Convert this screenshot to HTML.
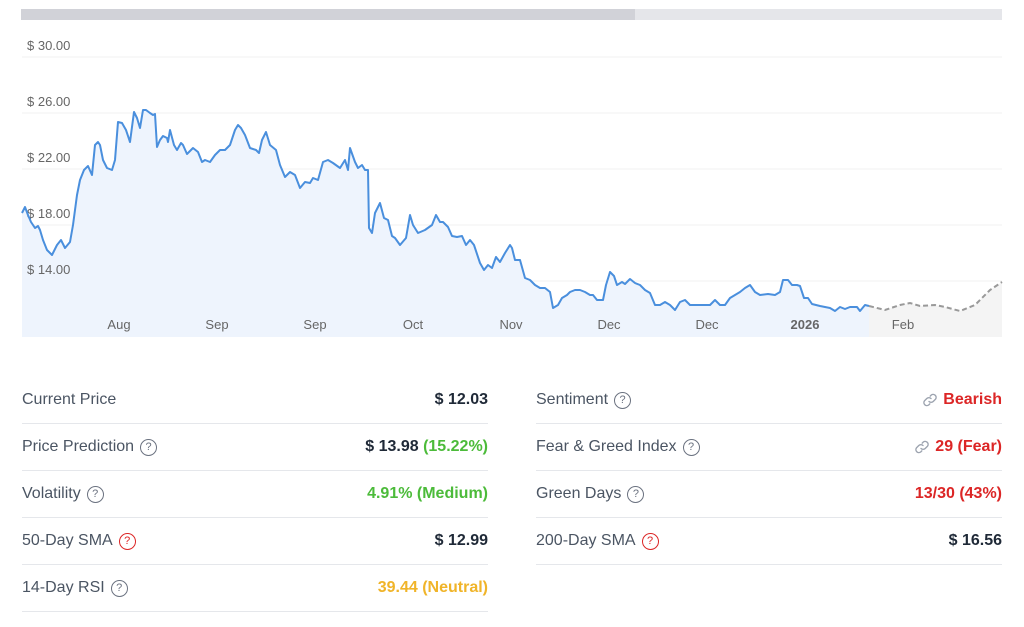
<!DOCTYPE html>
<html><head><meta charset="utf-8"><style>
body{margin:0;width:1024px;height:627px;background:#fff;position:relative;overflow:hidden;font-family:"Liberation Sans",Arial,sans-serif}
.col{position:absolute;top:377px;width:466px}
.row{height:46px;border-bottom:1px solid #e5e7eb;display:flex;align-items:center;justify-content:space-between;font-size:16px}
.l{color:#4b5563;display:flex;align-items:center}
.v{font-weight:bold;color:#1f2937;display:flex;align-items:center}
.q{display:inline-block;width:15px;height:15px;border:1.3px solid #6b7280;border-radius:50%;font-size:11px;line-height:15px;text-align:center;color:#6b7280;margin-left:6px;font-weight:normal}
.q.r{border-color:#dc2626;color:#dc2626}
.g{color:#4cbb3a}.red{color:#dc2626}.y{color:#f0b429}
.lk{margin-right:5px}
</style></head><body>
<div style="position:absolute;left:21px;top:9px;width:981px;height:11px;background:#e5e6ea"></div>
<div style="position:absolute;left:21px;top:9px;width:614px;height:11px;background:#d1d2d8"></div>
<svg width="1024" height="345" style="position:absolute;left:0;top:0" font-family="Liberation Sans,Arial,sans-serif">
<polygon fill="#f4f4f4" points="869,337 869,306 885,310 900,305 910,303 920,306 935,305 945,307 960,311 975,305 990,290 1002,282 1002,337"/>
<g stroke="#f0f0f0" stroke-width="1">
<line x1="22" y1="57" x2="1002" y2="57"/><line x1="22" y1="113" x2="1002" y2="113"/><line x1="22" y1="169" x2="1002" y2="169"/><line x1="22" y1="225" x2="1002" y2="225"/><line x1="22" y1="281" x2="1002" y2="281"/></g>
<polygon fill="#eef4fd" points="22,337 22,213 25,207 28,215 31,222 35,228 38,226 40,230 43,240 47,250 52,255 57,245 61,240 65,248 70,242 73,225 77,195 80,180 84,170 88,166 92,175 95,145 98,142 100,145 103,160 107,168 112,170 115,160 118,122 122,123 126,130 130,142 134,112 137,118 140,128 143,110 146,110 150,113 153,115 155,114 157,147 160,140 163,136 167,138 168,142 170,130 174,145 177,150 181,143 183,145 187,154 193,148 198,152 202,162 205,160 210,162 215,155 220,150 225,150 230,145 235,130 238,125 241,128 245,135 250,148 256,150 259,153 262,140 266,132 270,145 276,150 280,165 285,177 290,172 295,175 300,188 305,182 310,183 313,178 318,180 323,162 328,160 333,163 340,168 345,160 348,170 350,148 355,162 358,168 362,165 365,170 368,170 369,228 372,233 375,213 380,203 384,218 388,220 392,236 395,238 400,245 406,238 410,215 413,225 418,233 425,230 432,225 436,215 440,222 443,222 448,227 452,236 457,237 462,236 466,245 470,240 474,245 480,263 484,270 488,265 492,268 496,257 500,262 505,253 510,245 512,248 515,260 520,260 525,278 530,280 535,285 540,288 545,288 550,292 553,308 558,305 562,298 567,295 570,292 575,290 580,290 585,292 590,295 593,295 597,300 603,300 606,285 610,272 614,276 617,285 622,282 625,284 630,279 635,283 640,285 645,290 650,293 655,305 660,305 665,302 670,305 675,310 680,302 685,300 690,305 700,305 710,305 715,300 720,305 725,305 730,298 735,295 740,292 745,288 750,285 755,292 760,295 768,294 775,295 780,292 783,280 788,280 792,285 797,285 800,286 804,298 808,298 812,304 820,306 830,308 835,311 840,307 845,309 850,307 857,307 860,311 865,305 869,306 869,337"/>
<g fill="#666" font-size="13"><text x="27" y="50">$ 30.00</text><text x="27" y="106">$ 26.00</text><text x="27" y="162">$ 22.00</text><text x="27" y="218">$ 18.00</text><text x="27" y="274">$ 14.00</text></g>
<polyline fill="none" stroke="#4a8fdd" stroke-width="2" stroke-linejoin="round" points="22,213 25,207 28,215 31,222 35,228 38,226 40,230 43,240 47,250 52,255 57,245 61,240 65,248 70,242 73,225 77,195 80,180 84,170 88,166 92,175 95,145 98,142 100,145 103,160 107,168 112,170 115,160 118,122 122,123 126,130 130,142 134,112 137,118 140,128 143,110 146,110 150,113 153,115 155,114 157,147 160,140 163,136 167,138 168,142 170,130 174,145 177,150 181,143 183,145 187,154 193,148 198,152 202,162 205,160 210,162 215,155 220,150 225,150 230,145 235,130 238,125 241,128 245,135 250,148 256,150 259,153 262,140 266,132 270,145 276,150 280,165 285,177 290,172 295,175 300,188 305,182 310,183 313,178 318,180 323,162 328,160 333,163 340,168 345,160 348,170 350,148 355,162 358,168 362,165 365,170 368,170 369,228 372,233 375,213 380,203 384,218 388,220 392,236 395,238 400,245 406,238 410,215 413,225 418,233 425,230 432,225 436,215 440,222 443,222 448,227 452,236 457,237 462,236 466,245 470,240 474,245 480,263 484,270 488,265 492,268 496,257 500,262 505,253 510,245 512,248 515,260 520,260 525,278 530,280 535,285 540,288 545,288 550,292 553,308 558,305 562,298 567,295 570,292 575,290 580,290 585,292 590,295 593,295 597,300 603,300 606,285 610,272 614,276 617,285 622,282 625,284 630,279 635,283 640,285 645,290 650,293 655,305 660,305 665,302 670,305 675,310 680,302 685,300 690,305 700,305 710,305 715,300 720,305 725,305 730,298 735,295 740,292 745,288 750,285 755,292 760,295 768,294 775,295 780,292 783,280 788,280 792,285 797,285 800,286 804,298 808,298 812,304 820,306 830,308 835,311 840,307 845,309 850,307 857,307 860,311 865,305 869,306"/>
<polyline fill="none" stroke="#999" stroke-width="2" stroke-dasharray="5,3" points="869,306 885,310 900,305 910,303 920,306 935,305 945,307 960,311 975,305 990,290 1002,282"/>
<g fill="#666" font-size="13" text-anchor="middle"><text x="119" y="329">Aug</text><text x="217" y="329">Sep</text><text x="315" y="329">Sep</text><text x="413" y="329">Oct</text><text x="511" y="329">Nov</text><text x="609" y="329">Dec</text><text x="707" y="329">Dec</text><text x="805" y="329" font-weight="bold">2026</text><text x="903" y="329">Feb</text></g>
</svg>
<div class="col" style="left:22px">
<div class="row"><span class="l">Current Price</span><span class="v">$ 12.03</span></div>
<div class="row"><span class="l">Price Prediction<span class="q">?</span></span><span class="v">$ 13.98&nbsp;<span class="g">(15.22%)</span></span></div>
<div class="row"><span class="l">Volatility<span class="q">?</span></span><span class="v g">4.91% (Medium)</span></div>
<div class="row"><span class="l">50-Day SMA<span class="q r">?</span></span><span class="v">$ 12.99</span></div>
<div class="row"><span class="l">14-Day RSI<span class="q">?</span></span><span class="v y">39.44 (Neutral)</span></div>
</div>
<div class="col" style="left:536px">
<div class="row"><span class="l">Sentiment<span class="q">?</span></span><span class="v red"><svg class="lk" width="16" height="16" viewBox="0 0 16 16" fill="none" stroke="#9ca3af" stroke-width="1.4" stroke-linecap="round"><path d="M7 9.5a3 3 0 0 0 4.2 0l2.3-2.3a3 3 0 0 0-4.2-4.2L8.2 4.1"/><path d="M9 6.5a3 3 0 0 0-4.2 0L2.5 8.8a3 3 0 0 0 4.2 4.2l1.1-1.1"/></svg>Bearish</span></div>
<div class="row"><span class="l">Fear &amp; Greed Index<span class="q">?</span></span><span class="v red"><svg class="lk" width="16" height="16" viewBox="0 0 16 16" fill="none" stroke="#9ca3af" stroke-width="1.4" stroke-linecap="round"><path d="M7 9.5a3 3 0 0 0 4.2 0l2.3-2.3a3 3 0 0 0-4.2-4.2L8.2 4.1"/><path d="M9 6.5a3 3 0 0 0-4.2 0L2.5 8.8a3 3 0 0 0 4.2 4.2l1.1-1.1"/></svg>29 (Fear)</span></div>
<div class="row"><span class="l">Green Days<span class="q">?</span></span><span class="v red">13/30 (43%)</span></div>
<div class="row"><span class="l">200-Day SMA<span class="q r">?</span></span><span class="v">$ 16.56</span></div>
</div>
</body></html>
